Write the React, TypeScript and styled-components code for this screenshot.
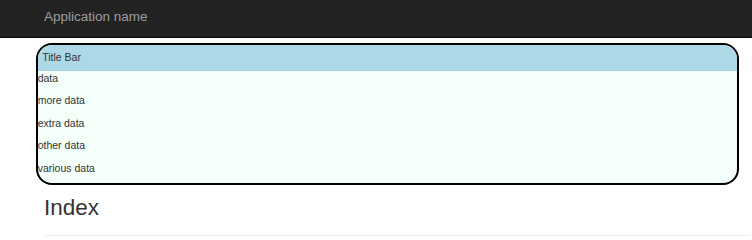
import React from "react";
import styled, { createGlobalStyle } from "styled-components";

const Global = createGlobalStyle`
  html, body { margin: 0; padding: 0; background: #fff; }
  body {
    font-family: "Liberation Sans", Arial, Helvetica, sans-serif;
    font-size: 10.5px;
    line-height: 15px;
    color: #333;
  }
  * { box-sizing: border-box; }
`;

const NavBar = styled.header`
  height: 37.5px;
  background: #222;
  border-bottom: 0.75px solid #080808;
  display: flex;
  align-items: center;
  padding-left: 44px;
`;

const Brand = styled.span`
  font-size: 13.5px;
  line-height: 18px;
  color: #9d9d9d;
  margin-top: -2px;
`;

const Panel = styled.section`
  margin: 5.5px 12.7px 0 35.7px;
  border: 2px solid #000;
  border-radius: 16px;
  background: #f5fffa;
  overflow: hidden;
`;

const TitleBar = styled.div`
  background: #add8e6;
  padding: 5.35px 4.5px;
  line-height: 15px;
`;

const Row = styled.p`
  margin: 0 0 7.5px 0;
  line-height: 15px;
`;

const Content = styled.main`
  padding: 0 2px 0 44px;
`;

const Heading = styled.h2`
  margin: 10.7px 0 0 0;
  font-size: 22.5px;
  line-height: 24.75px;
  font-weight: 500;
  color: #333;
`;

const Rule = styled.hr`
  margin: 14.5px 0 0 0;
  border: 0;
  border-top: 1px solid #eee;
`;

const rows = ["data", "more data", "extra data", "other data", "various data"];

export default function App() {
  return (
    <>
      <Global />
      <NavBar>
        <Brand>Application name</Brand>
      </NavBar>
      <Panel>
        <TitleBar>Title Bar</TitleBar>
        {rows.map((r) => (
          <Row key={r}>{r}</Row>
        ))}
      </Panel>
      <Content>
        <Heading>Index</Heading>
        <Rule />
      </Content>
    </>
  );
}
